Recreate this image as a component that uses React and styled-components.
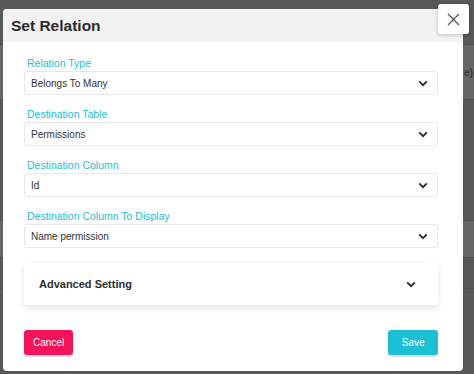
import React from "react";
import styled, { createGlobalStyle } from "styled-components";

const GlobalStyle = createGlobalStyle`
  html, body {
    margin: 0;
    padding: 0;
    overflow: hidden;
  }
  body {
    font-family: "Liberation Sans", Arial, Helvetica, sans-serif;
  }
`;

// Backdrop (dimmed page behind the modal)

const Page = styled.div`
  position: relative;
  width: 474px;
  height: 374px;
  background: #585858;
  overflow: hidden;
`;

const BackTable = styled.div`
  display: flex;
  flex-direction: column;
  padding-top: 44px;
`;

const BackRow = styled.div`
  height: ${props => props.h}px;
  display: flex;
  align-items: center;
  justify-content: flex-end;
  padding-right: 1px;
  background: ${props => (props.light ? "#666666" : "#585858")};
  border-top: 1px solid #4e4e4e;
  font-size: 10px;
  font-weight: bold;
  color: #3a3a3a;
`;

// Modal

const Modal = styled.div`
  position: absolute;
  left: 3px;
  top: 9px;
  width: 460px;
  height: 362px;
  background: #ffffff;
  border-radius: 4px;
  display: flex;
  flex-direction: column;
  overflow: hidden;
`;

const Header = styled.div`
  height: 33px;
  flex-shrink: 0;
  display: flex;
  align-items: center;
  padding-left: 8px;
  background: #f2f2f2;

  h1 {
    margin: 0;
    font-size: 15.5px;
    font-weight: bold;
    color: #2b2b2b;
  }
`;

const CloseButton = styled.button`
  position: absolute;
  left: 438px;
  top: 4px;
  width: 31px;
  height: 30px;
  display: flex;
  align-items: center;
  justify-content: center;
  padding: 0;
  border: none;
  border-radius: 3px;
  background: #ffffff;
  box-shadow: 0 1px 4px rgba(0, 0, 0, 0.2);
  cursor: pointer;
`;

const Body = styled.div`
  flex: 1;
  display: flex;
  flex-direction: column;
  padding: 14px 25px 16px 21px;
`;

const Field = styled.div`
  display: flex;
  flex-direction: column;
  margin-bottom: 12px;
`;

const Label = styled.label`
  display: block;
  height: 14px;
  line-height: 14px;
  margin: 0 0 1px 3px;
  font-size: 10.5px;
  color: #22bfd4;
`;

const Select = styled.div`
  height: 24px;
  box-sizing: border-box;
  display: flex;
  align-items: center;
  justify-content: space-between;
  padding: 0 9px 0 6px;
  border: 1px solid #e8e8e8;
  border-radius: 3px;
  background: #ffffff;
  font-size: 10px;
  color: #333333;
`;

const AdvancedCard = styled.div`
  margin-top: 3px;
  height: 42px;
  display: flex;
  align-items: center;
  justify-content: space-between;
  padding: 0 22px 0 15px;
  background: #ffffff;
  box-shadow: 0 3px 8px rgba(0, 0, 0, 0.1);
  border-radius: 2px;

  span {
    font-size: 11px;
    font-weight: bold;
    color: #2e2e2e;
  }
`;

const Footer = styled.div`
  margin-top: auto;
  display: flex;
  justify-content: space-between;
`;

const Button = styled.button`
  height: 25px;
  padding: 0 ${props => props.px}px;
  border: none;
  border-radius: 3px;
  background: ${props => props.color};
  box-shadow: 0 2px 0 rgba(0, 0, 0, 0.12);
  font-family: "Liberation Sans", Arial, sans-serif;
  font-size: 10px;
  color: #ffffff;
  cursor: pointer;
`;

function Chevron() {
  return (
    <svg width="10" height="7" viewBox="0 0 10 7">
      <polyline
        points="1.2,1.4 5,5.2 8.8,1.4"
        fill="none"
        stroke="#2a2a2a"
        strokeWidth="1.8"
      />
    </svg>
  );
}

function CloseIcon() {
  return (
    <svg width="13" height="13" viewBox="0 0 13 13">
      <path d="M1 1 L12 12 M12 1 L1 12" stroke="#555555" strokeWidth="1.3" />
    </svg>
  );
}

const fields = [
  { label: "Relation Type", value: "Belongs To Many" },
  { label: "Destination Table", value: "Permissions" },
  { label: "Destination Column", value: "Id" },
  { label: "Destination Column To Display", value: "Name permission" }
];

export default function App() {
  return (
    <Page>
      <GlobalStyle />
      <BackTable>
        <BackRow h={54} light>
          e)
        </BackRow>
        <BackRow h={120} />
        <BackRow h={36} light />
        <BackRow h={30} />
        <BackRow h={60} />
      </BackTable>

      <Modal>
        <Header>
          <h1>Set Relation</h1>
        </Header>
        <Body>
          {fields.map(f => (
            <Field key={f.label}>
              <Label>{f.label}</Label>
              <Select>
                <span>{f.value}</span>
                <Chevron />
              </Select>
            </Field>
          ))}
          <AdvancedCard>
            <span>Advanced Setting</span>
            <Chevron />
          </AdvancedCard>
          <Footer>
            <Button color="#f5125b" px={9}>
              Cancel
            </Button>
            <Button color="#1cc0d4" px={13.5}>
              Save
            </Button>
          </Footer>
        </Body>
      </Modal>

      <CloseButton>
        <CloseIcon />
      </CloseButton>
    </Page>
  );
}
